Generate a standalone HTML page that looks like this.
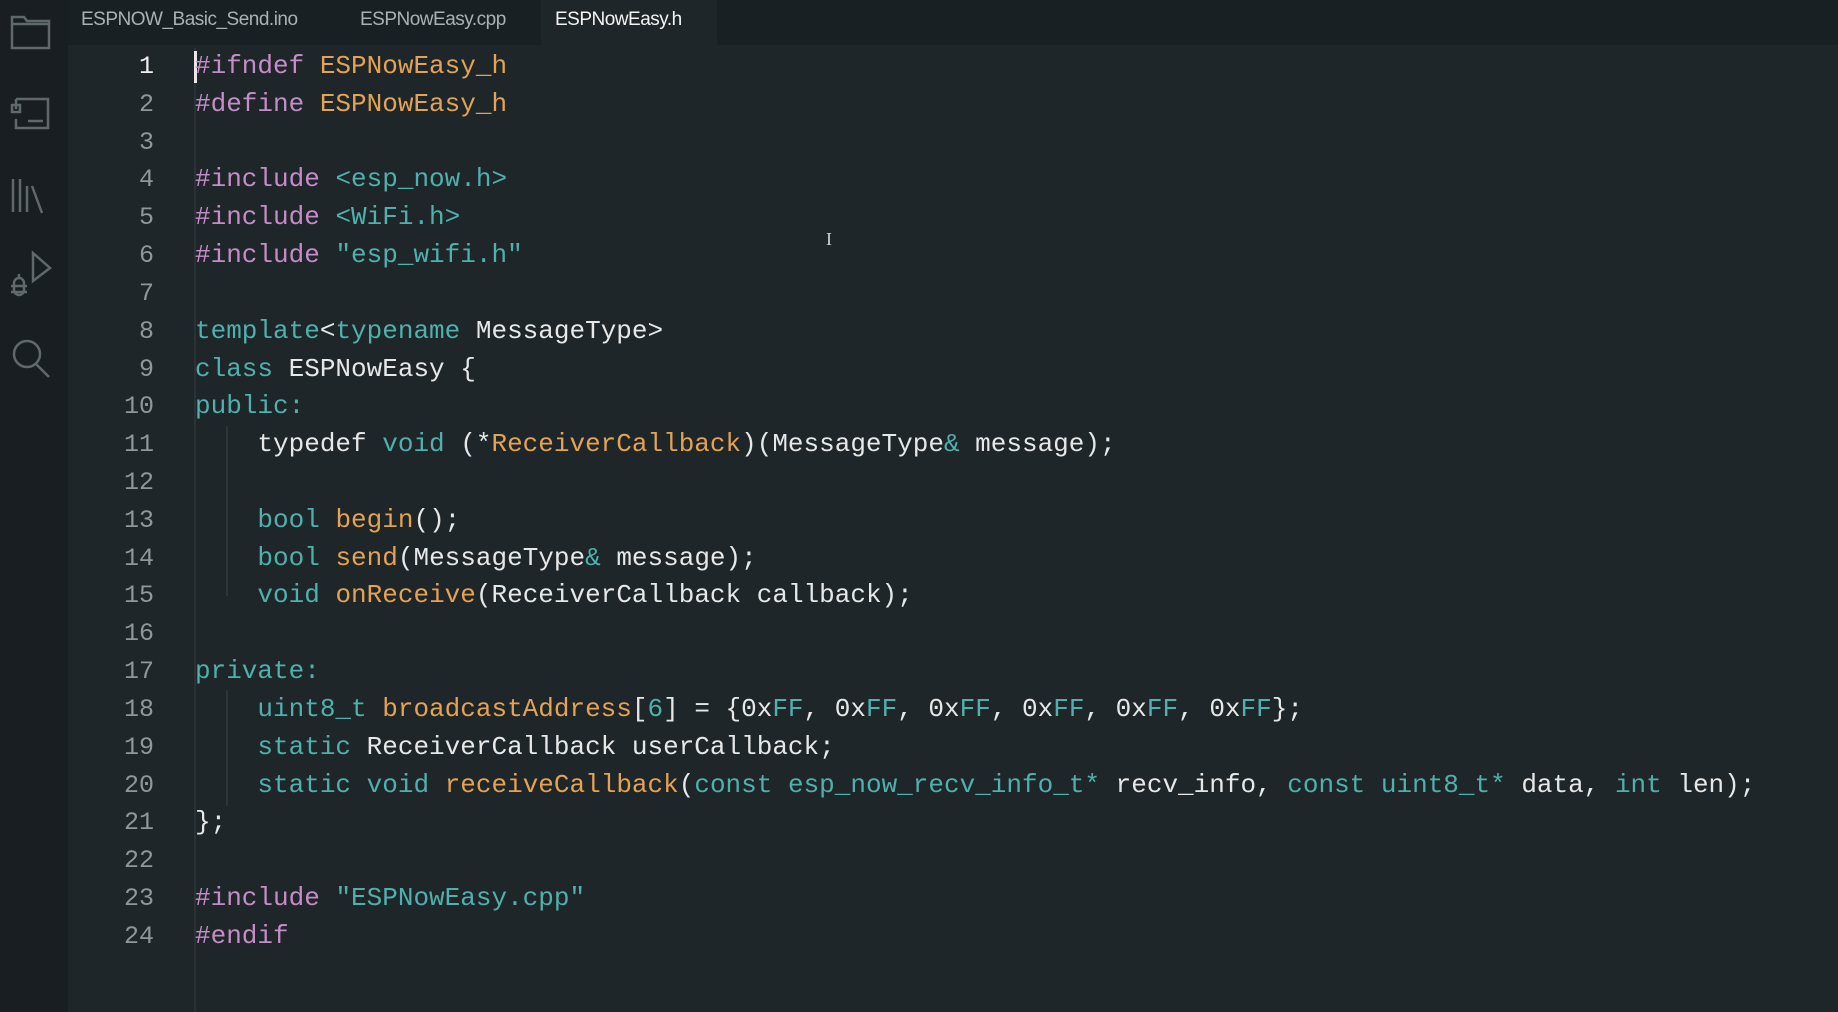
<!DOCTYPE html>
<html><head><meta charset="utf-8"><style>
html,body{margin:0;padding:0;}
body{width:1838px;height:1012px;background:#1f2629;position:relative;overflow:hidden;font-family:"Liberation Mono",monospace;}
#side{position:absolute;left:0;top:0;width:68px;height:1012px;background:#181e21;}
#tabs{position:absolute;left:68px;top:0;width:1770px;height:45px;background:#192023;}
.tab{position:absolute;top:0;height:45px;line-height:40px;font-family:"Liberation Sans",sans-serif;font-size:19px;color:#a9b1b4;letter-spacing:-0.5px;}
#ed{position:absolute;left:68px;top:45px;width:1770px;height:967px;background:#1f2629;}
.ln{position:absolute;left:68px;width:86px;text-align:right;font-size:25px;color:#8f979a;}
.cl{position:absolute;left:195px;font-size:26px;color:#e6e8e8;white-space:pre;}
.p{color:#c58cc7}.o{color:#e3a352}.t{color:#4fb0ad}.w{color:#e6e8e8}
</style></head><body>
<div id="side">
<svg width="68" height="400" style="position:absolute;left:0;top:0" fill="none" stroke="#5f686c" stroke-width="2.5">
<path d="M12 17h12l3 4h22v27H12z M12 24h37"/>
<path d="M16 99h32v29H16v-9 M16 109v-10 M12 105h8v7h-8z M28 121h15"/>
<path d="M13 179v33 M20 179v33 M27 186v26 M32 186l10 27"/>
<path d="M33 253l17 15-17 13z M14 283a5 5 0 0 1 10 0v7a5 5 0 0 1-10 0z M11 286h16 M11 292h16 M19 278v-4"/>
<circle cx="27" cy="354" r="13"/><path d="M36 364l13 13"/>
</svg>
</div>
<div id="tabs">
<div class="tab" style="left:13px">ESPNOW_Basic_Send.ino</div>
<div class="tab" style="left:292px">ESPNowEasy.cpp</div>
<div class="tab" style="left:473px;width:176px;background:#1f2629;color:#f2f4f4;padding-left:14px;box-sizing:border-box">ESPNowEasy.h</div>
</div>
<div id="ed"></div>
<div style="position:absolute;left:194px;top:48px;width:2px;height:964px;background:#2a3235"></div>
<div style="position:absolute;left:226px;top:426px;width:2px;height:170px;background:#2d3538"></div>
<div style="position:absolute;left:226px;top:690px;width:2px;height:116px;background:#2d3538"></div>
<div style="position:absolute;left:194px;top:51px;width:3px;height:32px;background:#e8e8e8"></div>
<div id="code"></div>
<script>
var L=[
'<span class="p">#ifndef</span> <span class="o">ESPNowEasy_h</span>',
'<span class="p">#define</span> <span class="o">ESPNowEasy_h</span>',
'',
'<span class="p">#include</span> <span class="t">&lt;esp_now.h&gt;</span>',
'<span class="p">#include</span> <span class="t">&lt;WiFi.h&gt;</span>',
'<span class="p">#include</span> <span class="t">"esp_wifi.h"</span>',
'',
'<span class="t">template</span>&lt;<span class="t">typename</span> MessageType&gt;',
'<span class="t">class</span> ESPNowEasy {',
'<span class="t">public:</span>',
'    typedef <span class="t">void</span> (*<span class="o">ReceiverCallback</span>)(MessageType<span class="t">&amp;</span> message);',
'',
'    <span class="t">bool</span> <span class="o">begin</span>();',
'    <span class="t">bool</span> <span class="o">send</span>(MessageType<span class="t">&amp;</span> message);',
'    <span class="t">void</span> <span class="o">onReceive</span>(ReceiverCallback callback);',
'',
'<span class="t">private:</span>',
'    <span class="t">uint8_t</span> <span class="o">broadcastAddress</span>[<span class="t">6</span>] = {0x<span class="t">FF</span>, 0x<span class="t">FF</span>, 0x<span class="t">FF</span>, 0x<span class="t">FF</span>, 0x<span class="t">FF</span>, 0x<span class="t">FF</span>};',
'    <span class="t">static</span> ReceiverCallback userCallback;',
'    <span class="t">static</span> <span class="t">void</span> <span class="o">receiveCallback</span>(<span class="t">const</span> <span class="t">esp_now_recv_info_t*</span> recv_info, <span class="t">const</span> <span class="t">uint8_t*</span> data, <span class="t">int</span> len);',
'};',
'',
'<span class="p">#include</span> <span class="t">"ESPNowEasy.cpp"</span>',
'<span class="p">#endif</span>'];
var h='';
for(var i=0;i<L.length;i++){var y=68+i*37.82-17;
h+='<div class="ln" style="top:'+(y+1)+'px;'+(i==0?'color:#f0f0f0':'')+'">'+(i+1)+'</div><div class="cl" style="top:'+y+'px">'+L[i]+'</div>';}
document.getElementById('code').innerHTML=h;
</script>
<div style="position:absolute;left:826px;top:229px;color:#cfd3d4;font-size:18px;font-family:'Liberation Serif',serif">I</div>
</body></html>
